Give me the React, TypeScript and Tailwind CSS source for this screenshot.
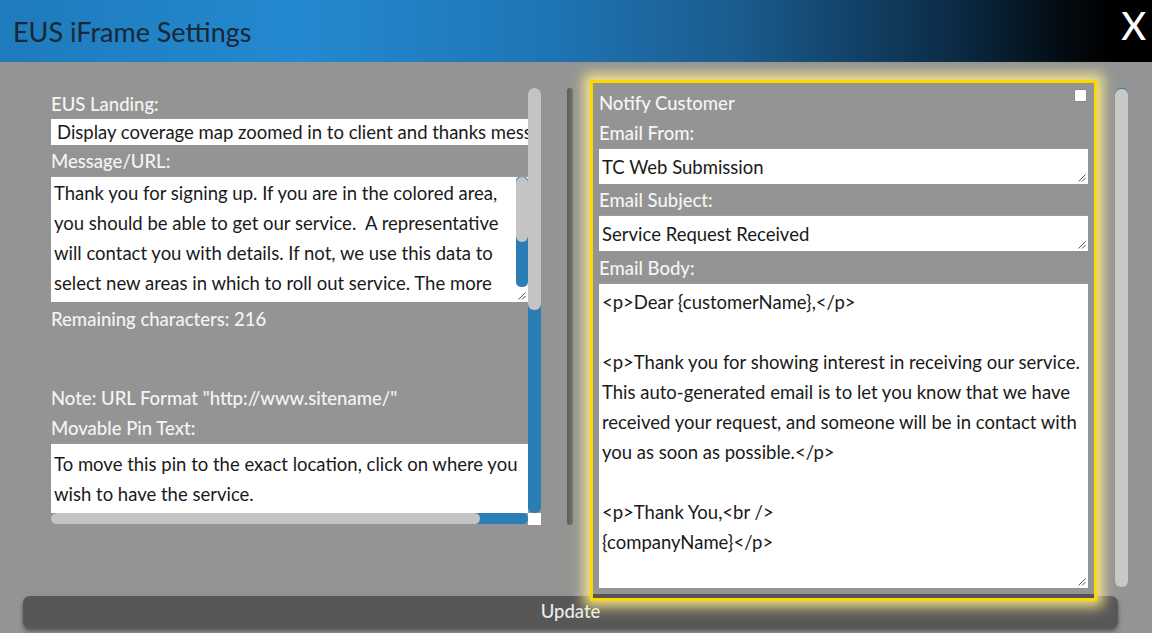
import React from "react";

const font = { fontFamily: "Lato, 'Noto Sans', 'Liberation Sans', sans-serif" };

function Grip() {
  return (
    <svg width="10" height="10" viewBox="0 0 10 10" className="absolute bottom-[2px] right-[2px]">
      <line x1="9.5" y1="2.5" x2="2.5" y2="9.5" stroke="#555" strokeWidth="1" />
      <line x1="9.5" y1="6" x2="6" y2="9.5" stroke="#555" strokeWidth="1" />
    </svg>
  );
}

function Label({ children }: { children: React.ReactNode }) {
  return <div className="text-[18.5px] leading-[22px] text-[#f4f4f4] font-medium whitespace-nowrap">{children}</div>;
}

export default function App() {
  return (
    <div className="w-[1152px] h-[633px] bg-[#949494] overflow-hidden relative" style={font}>
      {/* Header */}
      <div className="h-[62px] flex items-center justify-between pl-[13px] pr-[6px] bg-[linear-gradient(to_right,#1e7bbc_0%,#2389d0_26%,#1f74b3_48%,#1a5c8f_64%,#0c2d49_82%,#000_96%)]">
        <div className="text-[27px] leading-[32px] text-[#1a2733] pt-[2px]">EUS iFrame Settings</div>
        <div className="text-[38px] leading-[40px] text-white font-medium -mt-[12px]">X</div>
      </div>

      {/* Main row */}
      <div className="flex items-start relative">
        {/* Left scroll region */}
        <div className="ml-[51px] mt-[26px] w-[490px] h-[437px] flex flex-col">
          <div className="flex h-[425px]">
            <div className="w-[477px] h-[425px] overflow-hidden">
              <div className="pt-[5px]">
                <Label>EUS Landing:</Label>
                <div className="mt-[3px] h-[27px] bg-white border-t border-[#9a9a9a] overflow-hidden whitespace-nowrap pl-[6px] text-[18.5px] leading-[26px] text-[#1a1a1a]">
                  Display coverage map zoomed in to client and thanks message
                </div>
                <div className="mt-[5px]"><Label>Message/URL:</Label></div>
                <div className="mt-[4px] h-[126px] bg-white border-t border-[#9a9a9a] relative flex">
                  <div className="flex-1 pl-[3px] pt-[1px] text-[18.5px] leading-[30px] text-[#1a1a1a] whitespace-pre overflow-hidden">
                    {"Thank you for signing up. If you are in the colored area,\nyou should be able to get our service.  A representative\nwill contact you with details. If not, we use this data to\nselect new areas in which to roll out service. The more"}
                  </div>
                  <div className="w-[12px] flex flex-col">
                    <div className="h-[110px] bg-[#2b7db5] rounded-b-[5px] rounded-t-[4px] overflow-hidden">
                      <div className="h-[65px] bg-[#c4c4c4] rounded-[6px]" />
                    </div>
                    <div className="flex-1 relative">
                      <Grip />
                    </div>
                  </div>
                </div>
                <div className="mt-[6px]"><Label>Remaining characters: 216</Label></div>
                <div className="mt-[57px]"><Label>Note: URL Format "http://www.sitename/"</Label></div>
                <div className="mt-[8px]"><Label>Movable Pin Text:</Label></div>
                <div className="mt-[4px] h-[80px] bg-white border-t border-[#9a9a9a] pl-[3px] pt-[5px] text-[18.5px] leading-[30px] text-[#1a1a1a] whitespace-pre overflow-hidden">
                  {"To move this pin to the exact location, click on where you\nwish to have the service."}
                </div>
              </div>
            </div>
            {/* vertical scrollbar */}
            <div className="w-[13px] h-[425px] bg-[#2b7db5] rounded-[6px]">
              <div className="h-[222px] bg-[#c4c4c4] rounded-[6px]" />
            </div>
          </div>
          <div className="flex h-[12px]">
            <div className="w-[477px] h-[11px] bg-[#2b7db5] rounded-[6px]">
              <div className="w-[429px] h-[11px] bg-[#c4c4c4] rounded-[6px]" />
            </div>
            <div className="w-[13px] h-[12px] bg-white" />
          </div>
        </div>

        {/* Divider */}
        <div className="ml-[26px] mt-[26px] w-[6px] h-[437px] rounded-[3px] bg-[linear-gradient(to_right,#5c5c54,#74746c)]" />

        {/* Right panel */}
        <div className="ml-[17px] mt-[18px] w-[507px] h-[521px] border-[3px] border-[#ffd700] bg-[#949494] relative z-10 shadow-[0_0_12px_6px_rgba(255,238,140,0.9)] flex flex-col">
          <div className="flex-1 px-[6px] pt-[9px] overflow-hidden">
            <div className="flex justify-between items-start pr-[1px]">
              <Label>Notify Customer</Label>
              <div className="mt-[-3px] w-[13px] h-[13px] bg-white rounded-[2px] border border-[#8a8a8a]" />
            </div>
            <div className="mt-[8px]"><Label>Email From:</Label></div>
            <div className="mt-[4px] h-[36px] bg-white border-t border-[#9a9a9a] relative pl-[3px] pt-[3px] text-[18.5px] leading-[30px] text-[#1a1a1a] whitespace-nowrap">
              TC Web Submission
              <Grip />
            </div>
            <div className="mt-[5px]"><Label>Email Subject:</Label></div>
            <div className="mt-[4px] h-[36px] bg-white border-t border-[#9a9a9a] relative pl-[3px] pt-[3px] text-[18.5px] leading-[30px] text-[#1a1a1a] whitespace-nowrap">
              Service Request Received
              <Grip />
            </div>
            <div className="mt-[6px]"><Label>Email Body:</Label></div>
            <div className="mt-[4px] h-[305px] bg-white border-t border-[#9a9a9a] relative pl-[3px] pt-[3px] text-[18.5px] leading-[30px] text-[#1a1a1a] whitespace-pre overflow-hidden">
              {"<p>Dear {customerName},</p>\n\n<p>Thank you for showing interest in receiving our service.\nThis auto-generated email is to let you know that we have\nreceived your request, and someone will be in contact with\nyou as soon as possible.</p>\n\n<p>Thank You,<br />\n{companyName}</p>"}
              <Grip />
            </div>
          </div>
          <div className="h-[4px] bg-[#565656]" />
        </div>

        {/* Right scrollbar */}
        <div className="ml-[18px] mt-[26px] w-[13px] h-[498px] bg-[#2b7db5] rounded-[6px]">
          <div className="h-[498px] bg-[#c8c8c8] rounded-[6px] mt-[1px]" />
        </div>
      </div>

      {/* Update button */}
      <div className="ml-[23px] -mt-[5px] w-[1095px] h-[32px] bg-[#575757] rounded-[7px] shadow-[0_3px_4px_rgba(0,0,0,0.45)] flex items-center justify-center text-[18.5px] font-medium text-[#ececec]">
        Update
      </div>
    </div>
  );
}
